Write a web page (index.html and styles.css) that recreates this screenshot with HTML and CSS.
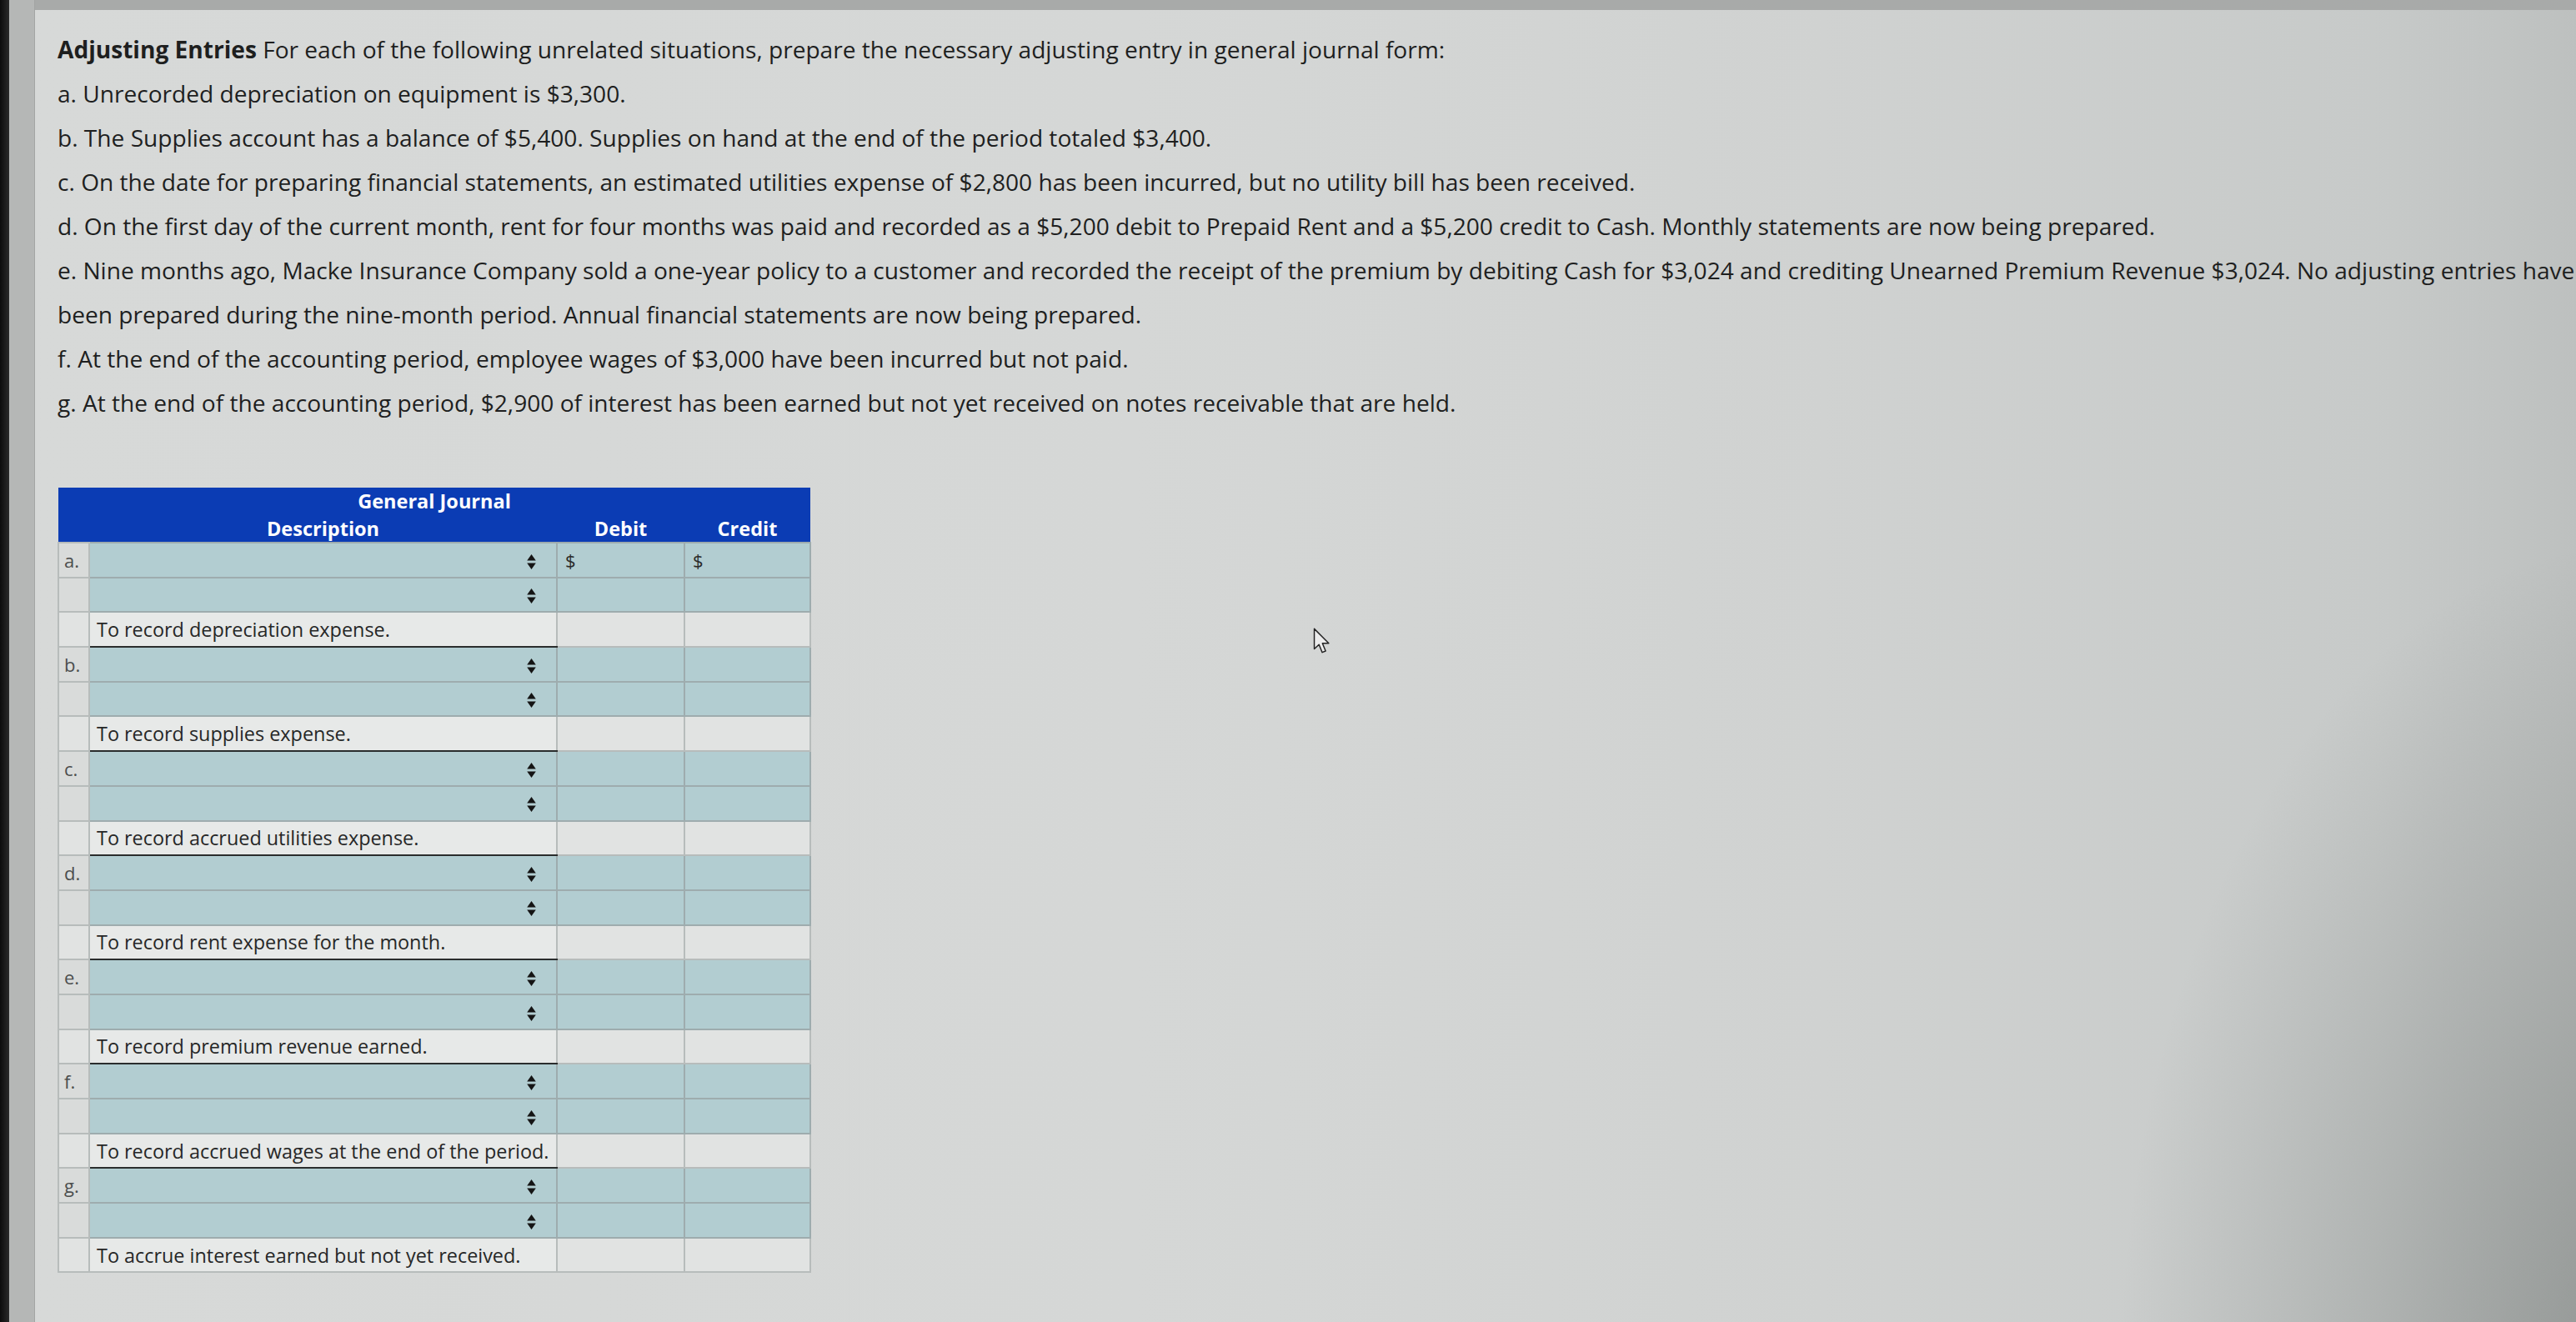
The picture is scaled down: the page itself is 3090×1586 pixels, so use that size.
FILE: index.html
```html
<!DOCTYPE html>
<html lang="en">
<head>
<meta charset="utf-8">
<title>Adjusting Entries</title>
<link rel="stylesheet" href="styles.css">
</head>
<body>
<div class="screen">
  <div class="bezel"></div>
  <div class="side"></div>
  <div class="main">
    <div class="topbar"></div>
    <div class="panel">
      <div class="problem">
        <p class="line"><b>Adjusting Entries</b> For each of the following unrelated situations, prepare the necessary adjusting entry in general journal form:</p>
        <p class="line">a. Unrecorded depreciation on equipment is $3,300.</p>
        <p class="line">b. The Supplies account has a balance of $5,400. Supplies on hand at the end of the period totaled $3,400.</p>
        <p class="line">c. On the date for preparing financial statements, an estimated utilities expense of $2,800 has been incurred, but no utility bill has been received.</p>
        <p class="line">d. On the first day of the current month, rent for four months was paid and recorded as a $5,200 debit to Prepaid Rent and a $5,200 credit to Cash. Monthly statements are now being prepared.</p>
        <p class="line">e. Nine months ago, Macke Insurance Company sold a one-year policy to a customer and recorded the receipt of the premium by debiting Cash for $3,024 and crediting Unearned Premium Revenue $3,024. No adjusting entries have been prepared during the nine-month period. Annual financial statements are now being prepared.</p>
        <p class="line">f. At the end of the accounting period, employee wages of $3,000 have been incurred but not paid.</p>
        <p class="line">g. At the end of the accounting period, $2,900 of interest has been earned but not yet received on notes receivable that are held.</p>
      </div>

      <table class="journal">
        <colgroup>
          <col class="c-label"><col class="c-desc"><col class="c-amt"><col class="c-amt2">
        </colgroup>
        <thead>
          <tr class="h1"><th colspan="4">General Journal</th></tr>
          <tr class="h2"><th colspan="2" class="h-desc">Description</th><th>Debit</th><th>Credit</th></tr>
        </thead>
        <tbody>
          <!-- a -->
          <tr class="in"><td class="lbl">a.</td><td class="sel"><span class="arrows"><svg viewBox="0 0 10 17" width="11" height="18"><path d="M0 7 L5 0 L10 7 Z M0 10 L10 10 L5 17 Z"/></svg></span></td><td class="amt"><span class="dollar">$</span></td><td class="amt"><span class="dollar">$</span></td></tr>
          <tr class="in"><td class="lbl"></td><td class="sel"><span class="arrows"><svg viewBox="0 0 10 17" width="11" height="18"><path d="M0 7 L5 0 L10 7 Z M0 10 L10 10 L5 17 Z"/></svg></span></td><td class="amt"></td><td class="amt"></td></tr>
          <tr class="note"><td class="lbl"></td><td class="memo">To record depreciation expense.</td><td></td><td></td></tr>
          <!-- b -->
          <tr class="in"><td class="lbl">b.</td><td class="sel"><span class="arrows"><svg viewBox="0 0 10 17" width="11" height="18"><path d="M0 7 L5 0 L10 7 Z M0 10 L10 10 L5 17 Z"/></svg></span></td><td class="amt"></td><td class="amt"></td></tr>
          <tr class="in"><td class="lbl"></td><td class="sel"><span class="arrows"><svg viewBox="0 0 10 17" width="11" height="18"><path d="M0 7 L5 0 L10 7 Z M0 10 L10 10 L5 17 Z"/></svg></span></td><td class="amt"></td><td class="amt"></td></tr>
          <tr class="note"><td class="lbl"></td><td class="memo">To record supplies expense.</td><td></td><td></td></tr>
          <!-- c -->
          <tr class="in"><td class="lbl">c.</td><td class="sel"><span class="arrows"><svg viewBox="0 0 10 17" width="11" height="18"><path d="M0 7 L5 0 L10 7 Z M0 10 L10 10 L5 17 Z"/></svg></span></td><td class="amt"></td><td class="amt"></td></tr>
          <tr class="in"><td class="lbl"></td><td class="sel"><span class="arrows"><svg viewBox="0 0 10 17" width="11" height="18"><path d="M0 7 L5 0 L10 7 Z M0 10 L10 10 L5 17 Z"/></svg></span></td><td class="amt"></td><td class="amt"></td></tr>
          <tr class="note"><td class="lbl"></td><td class="memo">To record accrued utilities expense.</td><td></td><td></td></tr>
          <!-- d -->
          <tr class="in"><td class="lbl">d.</td><td class="sel"><span class="arrows"><svg viewBox="0 0 10 17" width="11" height="18"><path d="M0 7 L5 0 L10 7 Z M0 10 L10 10 L5 17 Z"/></svg></span></td><td class="amt"></td><td class="amt"></td></tr>
          <tr class="in"><td class="lbl"></td><td class="sel"><span class="arrows"><svg viewBox="0 0 10 17" width="11" height="18"><path d="M0 7 L5 0 L10 7 Z M0 10 L10 10 L5 17 Z"/></svg></span></td><td class="amt"></td><td class="amt"></td></tr>
          <tr class="note"><td class="lbl"></td><td class="memo">To record rent expense for the month.</td><td></td><td></td></tr>
          <!-- e -->
          <tr class="in"><td class="lbl">e.</td><td class="sel"><span class="arrows"><svg viewBox="0 0 10 17" width="11" height="18"><path d="M0 7 L5 0 L10 7 Z M0 10 L10 10 L5 17 Z"/></svg></span></td><td class="amt"></td><td class="amt"></td></tr>
          <tr class="in"><td class="lbl"></td><td class="sel"><span class="arrows"><svg viewBox="0 0 10 17" width="11" height="18"><path d="M0 7 L5 0 L10 7 Z M0 10 L10 10 L5 17 Z"/></svg></span></td><td class="amt"></td><td class="amt"></td></tr>
          <tr class="note"><td class="lbl"></td><td class="memo">To record premium revenue earned.</td><td></td><td></td></tr>
          <!-- f -->
          <tr class="in"><td class="lbl">f.</td><td class="sel"><span class="arrows"><svg viewBox="0 0 10 17" width="11" height="18"><path d="M0 7 L5 0 L10 7 Z M0 10 L10 10 L5 17 Z"/></svg></span></td><td class="amt"></td><td class="amt"></td></tr>
          <tr class="in"><td class="lbl"></td><td class="sel"><span class="arrows"><svg viewBox="0 0 10 17" width="11" height="18"><path d="M0 7 L5 0 L10 7 Z M0 10 L10 10 L5 17 Z"/></svg></span></td><td class="amt"></td><td class="amt"></td></tr>
          <tr class="note"><td class="lbl"></td><td class="memo">To record accrued wages at the end of the period.</td><td></td><td></td></tr>
          <!-- g -->
          <tr class="in"><td class="lbl">g.</td><td class="sel"><span class="arrows"><svg viewBox="0 0 10 17" width="11" height="18"><path d="M0 7 L5 0 L10 7 Z M0 10 L10 10 L5 17 Z"/></svg></span></td><td class="amt"></td><td class="amt"></td></tr>
          <tr class="in"><td class="lbl"></td><td class="sel"><span class="arrows"><svg viewBox="0 0 10 17" width="11" height="18"><path d="M0 7 L5 0 L10 7 Z M0 10 L10 10 L5 17 Z"/></svg></span></td><td class="amt"></td><td class="amt"></td></tr>
          <tr class="note last"><td class="lbl"></td><td class="memo">To accrue interest earned but not yet received.</td><td></td><td></td></tr>
        </tbody>
      </table>
    </div>
  </div>
  <svg class="cursor" viewBox="0 0 20 30" width="23" height="34"><path d="M1.2 1.2 L1.2 22.5 L6.2 17.8 L9.6 26.2 L13.2 24.7 L9.8 16.6 L16.5 16.6 Z"/></svg>
</div>
</body>
</html>
```

FILE: styles.css
```css
html, body {
  margin: 0;
  padding: 0;
}

body {
  width: 3090px;
  height: 1586px;
  overflow: hidden;
  background: #cfd1d0;
  font-family: "Open Sans", "Liberation Sans", sans-serif;
  color: #1c1c1c;
}

.screen {
  position: relative;
  display: flex;
  width: 3090px;
  height: 1586px;
  overflow: hidden;
}

.bezel {
  flex: none;
  width: 11px;
  background: linear-gradient(90deg, #0c0c0c, #2a2a2a);
}

.side {
  flex: none;
  width: 31px;
  background: #b5b7b6;
  border-right: 1px solid #a3a5a4;
  box-sizing: border-box;
}

.main {
  flex: none;
  width: 3300px;
  display: flex;
  flex-direction: column;
  background:
    radial-gradient(ellipse 620px 1000px at 3120px 1650px, rgba(95, 100, 97, 0.45), rgba(95, 100, 97, 0) 100%),
    linear-gradient(90deg, #d7d9d8 0%, #d5d7d6 40%, #d0d2d1 65%, #c7cac9 85%, #b7bab9 97%, #a8acaa 100%);
}

.topbar {
  flex: none;
  height: 12px;
  background: #a8aaa9;
}

.panel {
  flex: 1;
  padding: 21px 0 0 27px;
}

.problem {
  width: 3075px;
}

.line {
  margin: 0;
  font-size: 28.1px;
  line-height: 53px;
  color: #1e1f1f;
}

.line b {
  font-weight: 700;
}

/* Journal table */
.journal {
  margin-top: 75px;
  border-collapse: collapse;
  table-layout: fixed;
  width: 902px;
}

.c-label { width: 37px; }
.c-desc { width: 561px; }
.c-amt { width: 153px; }
.c-amt2 { width: 151px; }

.journal thead th {
  background: #0b3cb4;
  color: #ffffff;
  font-weight: 700;
  font-size: 23.5px;
  line-height: 26px;
  padding: 0;
}

.journal .h1 th {
  padding-top: 3px;
  height: 26px;
}

.journal .h2 th {
  padding-top: 7px;
  padding-bottom: 3px;
  height: 26px;
}

.journal .h-desc {
  padding-left: 37px;
}

.journal tbody td {
  height: 39.7px;
  padding: 0;
  border: 2px solid #9eacae;
  vertical-align: middle;
}

.journal .lbl {
  background: #d9dbda;
  color: #4c4e4e;
  font-size: 22px;
  padding-left: 6px;
  border-color: #b7bcbb;
}

.journal .in td.sel,
.journal .in td.amt {
  background: #b2cdd1;
}

.journal .sel {
  text-align: right;
  padding-right: 24px;
}

.arrows {
  display: inline-block;
  vertical-align: middle;
  line-height: 0;
}

.arrows svg {
  fill: #151515;
}

.dollar {
  font-size: 22px;
  color: #2b2b2b;
  padding-left: 9px;
}

.journal .note td {
  background: #e1e3e2;
  border-color: #b7bcbb;
}

.journal .note td.memo {
  background: #e7e9e8;
  font-size: 23.4px;
  color: #262727;
  padding-left: 8px;
  border-bottom: 2px solid #2a2d2d;
  white-space: nowrap;
}

.journal .note.last td.memo {
  border-bottom-color: #b7bcbb;
}

.cursor {
  position: absolute;
  left: 1575px;
  top: 753px;
  fill: #ececec;
  stroke: #222222;
  stroke-width: 1.3;
  stroke-linejoin: round;
}
```
